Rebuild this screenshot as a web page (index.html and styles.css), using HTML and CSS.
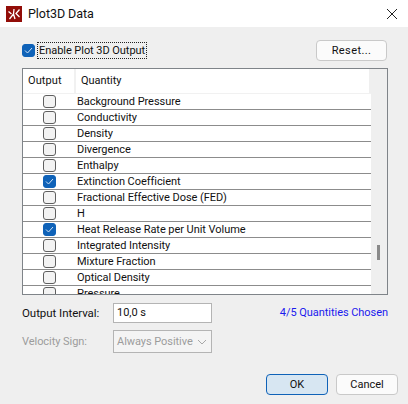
FILE: index.html
```html
<!DOCTYPE html>
<html lang="en">
<head>
<meta charset="UTF-8">
<title>Plot3D Data</title>
<link rel="stylesheet" href="styles.css">
</head>
<body>
<div class="titlebar">
    <svg class="logo" width="16" height="16" viewBox="0 0 16 16">
        <rect width="16" height="16" fill="#920d08"/>
        <path d="M2.5 5.5 L5.5 8 M8 3 L7.5 8 L3.5 13 M7.5 8 L9 13 M13.5 3.5 L10 7.5 L13.5 11" fill="none" stroke="#fff" stroke-width="1.3"/>
    </svg>
    <span class="title">Plot3D Data</span>
    <svg class="close" width="10" height="10" viewBox="0 0 10 10">
        <path d="M0 0 L10 10 M10 0 L0 10" stroke="#222" stroke-width="1"/>
    </svg>
</div>
<div class="content">
    <div class="toprow">
        <label class="enable">
            <span class="check on"><svg width="9" height="7" viewBox="0 0 9 7"><path d="M1 3.5 L3.5 6 L8 1" fill="none" stroke="#cfe2f5" stroke-width="1"/></svg></span>
            <span class="focus">Enable Plot 3D Output</span>
        </label>
        <button class="btn reset">Reset...</button>
    </div>
    <div class="table">
        <div class="main">
            <div class="head">
                <div class="h-out">Output</div>
                <div class="h-qty">Quantity</div>
            </div>
            <div class="rows">
                <div class="row"><div class="cell"><span class="check"></span></div><div class="name">Background Pressure</div></div>
                <div class="row"><div class="cell"><span class="check"></span></div><div class="name">Conductivity</div></div>
                <div class="row"><div class="cell"><span class="check"></span></div><div class="name">Density</div></div>
                <div class="row"><div class="cell"><span class="check"></span></div><div class="name">Divergence</div></div>
                <div class="row"><div class="cell"><span class="check"></span></div><div class="name">Enthalpy</div></div>
                <div class="row"><div class="cell"><span class="check on"><svg width="9" height="7" viewBox="0 0 9 7"><path d="M1 3.5 L3.5 6 L8 1" fill="none" stroke="#cfe2f5" stroke-width="1"/></svg></span></div><div class="name">Extinction Coefficient</div></div>
                <div class="row"><div class="cell"><span class="check"></span></div><div class="name">Fractional Effective Dose (FED)</div></div>
                <div class="row"><div class="cell"><span class="check"></span></div><div class="name">H</div></div>
                <div class="row"><div class="cell"><span class="check on"><svg width="9" height="7" viewBox="0 0 9 7"><path d="M1 3.5 L3.5 6 L8 1" fill="none" stroke="#cfe2f5" stroke-width="1"/></svg></span></div><div class="name">Heat Release Rate per Unit Volume</div></div>
                <div class="row"><div class="cell"><span class="check"></span></div><div class="name">Integrated Intensity</div></div>
                <div class="row"><div class="cell"><span class="check"></span></div><div class="name">Mixture Fraction</div></div>
                <div class="row"><div class="cell"><span class="check"></span></div><div class="name">Optical Density</div></div>
                <div class="row"><div class="cell"><span class="check"></span></div><div class="name">Pressure</div></div>
            </div>
        </div>
        <div class="scroll"><div class="thumb"></div></div>
    </div>
    <div class="form">
        <div class="formrow">
            <span class="label interval">Output Interval:</span>
            <div class="field">10,0 s</div>
            <span class="chosen">4/5 Quantities Chosen</span>
        </div>
        <div class="formrow disabled">
            <span class="label">Velocity Sign:</span>
            <div class="field combo">
                <span>Always Positive</span>
                <svg width="10" height="6" viewBox="0 0 10 6"><path d="M1 1 L5 5 L9 1" fill="none" stroke="#a8a8a8" stroke-width="1"/></svg>
            </div>
        </div>
    </div>
    <div class="actions">
        <button class="btn ok">OK</button>
        <button class="btn cancel">Cancel</button>
    </div>
</div>
</body>
</html>
```

FILE: styles.css
```css
* {
    box-sizing: border-box;
}

html, body {
    height: 100%;
}

body {
    margin: 0;
    display: flex;
    flex-direction: column;
    background-color: #efefef;
    font-family: "Roboto", "Noto Sans", sans-serif;
    font-size: 11px;
    letter-spacing: -0.05px;
    color: #111;
}

.titlebar {
    display: flex;
    align-items: center;
    height: 27px;
    padding: 0 11px 0 6px;
    background-color: #fff;
}

.logo {
    margin-right: 6px;
}

.title {
    flex: 1;
    font-size: 12.5px;
}

.content {
    flex: 1;
    display: flex;
    flex-direction: column;
    padding: 13px 20px 9px 22px;
}

.toprow {
    display: flex;
    justify-content: space-between;
    align-items: center;
    height: 21px;
    margin-right: 1px;
}

.enable {
    display: flex;
    align-items: center;
}

.focus {
    margin-left: 3px;
    padding: 0 1px;
    outline: 1px dotted #222;
    line-height: 15px;
}

.check {
    display: flex;
    align-items: center;
    justify-content: center;
    width: 13px;
    height: 13px;
    border: 1px solid #5f5f5f;
    border-radius: 3px;
    background-color: #f3f3f3;
}

.check.on {
    border-color: #0f62b8;
    background-color: #0f62b8;
}

.btn {
    height: 21px;
    border: 1px solid #c9c9c9;
    border-radius: 4px;
    background-color: #fbfbfb;
    color: #111;
    font: inherit;
    padding: 0;
}

.reset {
    width: 71px;
    letter-spacing: 0.4px;
}

.table {
    display: flex;
    height: 227px;
    margin-top: 7px;
    border: 1px solid #7f8489;
}

.main {
    flex: 1;
    overflow: hidden;
}

.head {
    display: flex;
    height: 24px;
    margin-right: 2px;
    background-color: #fff;
    line-height: 24px;
}

.h-out {
    width: 53px;
    padding-left: 5px;
    border-right: 2px solid #f1f1f1;
    letter-spacing: 0.1px;
}

.h-qty {
    padding-left: 5px;
}

.rows {
    background-color: #fff;
    border-top: 1px solid #f1f1f1;
}

.row {
    display: flex;
    align-items: center;
    height: 16px;
    border-bottom: 1px solid #8c8c8c;
}

.cell {
    display: flex;
    justify-content: center;
    width: 54px;
    padding-right: 2px;
}

.name {
    line-height: 15px;
    margin-top: -1px;
}

.scroll {
    width: 16px;
    padding: 176px 0 0 6px;
}

.thumb {
    width: 3px;
    height: 15px;
    background-color: #8a8a8a;
}

.form {
    display: flex;
    flex-direction: column;
    gap: 6px;
    margin-top: 6px;
}

.formrow {
    display: flex;
    align-items: center;
    height: 23px;
}

.label {
    width: 91px;
}

.interval {
    font-size: 11.5px;
}

.field {
    display: flex;
    align-items: center;
    width: 99px;
    height: 20px;
    padding-left: 3px;
    border: 1px solid #b4b4b4;
    background-color: #fff;
    white-space: nowrap;
}

.combo {
    justify-content: space-between;
    height: 23px;
    padding-right: 4px;
    background-color: #f4f4f4;
}

.disabled {
    color: #9c9c9c;
}

.chosen {
    margin-left: auto;
    color: #1a1aee;
}

.actions {
    display: flex;
    justify-content: flex-end;
    gap: 8px;
    margin-top: auto;
    margin-right: -10px;
}

.ok, .cancel {
    width: 62px;
}

.ok {
    border-color: #0f62b8;
    background-color: #d7e6f2;
}
```
